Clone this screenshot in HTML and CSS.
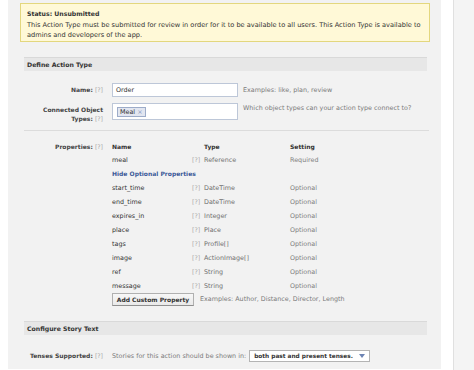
FILE: index.html
```html
<!DOCTYPE html>
<html>
<head>
<meta charset="utf-8">
<title>Define Action Type</title>
<link rel="stylesheet" href="styles.css">
</head>
<body>
<div class="page">
  <div class="main">
    <div class="notice">
      <div class="notice-title">Status: Unsubmitted</div>
      <div>This Action Type must be submitted for review in order for it to be available to all users. This Action Type is available to<br>admins and developers of the app.</div>
    </div>

    <div class="section">
      <div class="sec-head">Define Action Type</div>

      <div class="row row-name">
        <div class="lbl">Name: <span class="help">[?]</span></div>
        <div class="field">
          <div class="input">Order</div>
          <span class="desc">Examples: like, plan, review</span>
        </div>
      </div>

      <div class="row row-cot">
        <div class="lbl lbl-two">Connected Object<br>Types: <span class="help">[?]</span></div>
        <div class="field field-top">
          <div class="input input-tokens"><span class="token">Meal <span class="token-x">×</span></span></div>
          <span class="desc desc-top">Which object types can your action type connect to?</span>
        </div>
      </div>

      <div class="divider"></div>

      <div class="row row-props">
        <div class="lbl lbl-props">Properties: <span class="help">[?]</span></div>
        <div class="ptable">
          <div class="prow phead"><span>Name</span><span></span><span>Type</span><span>Setting</span></div>
          <div class="prow"><span class="pname">meal</span><span class="help">[?]</span><span class="ptype">Reference</span><span class="pset">Required</span></div>
          <div class="prow"><span class="plink">Hide Optional Properties</span></div>
          <div class="prow"><span class="pname">start_time</span><span class="help">[?]</span><span class="ptype">DateTime</span><span class="pset">Optional</span></div>
          <div class="prow"><span class="pname">end_time</span><span class="help">[?]</span><span class="ptype">DateTime</span><span class="pset">Optional</span></div>
          <div class="prow"><span class="pname">expires_in</span><span class="help">[?]</span><span class="ptype">Integer</span><span class="pset">Optional</span></div>
          <div class="prow"><span class="pname">place</span><span class="help">[?]</span><span class="ptype">Place</span><span class="pset">Optional</span></div>
          <div class="prow"><span class="pname">tags</span><span class="help">[?]</span><span class="ptype">Profile[]</span><span class="pset">Optional</span></div>
          <div class="prow"><span class="pname">image</span><span class="help">[?]</span><span class="ptype">ActionImage[]</span><span class="pset">Optional</span></div>
          <div class="prow"><span class="pname">ref</span><span class="help">[?]</span><span class="ptype">String</span><span class="pset">Optional</span></div>
          <div class="prow"><span class="pname">message</span><span class="help">[?]</span><span class="ptype">String</span><span class="pset">Optional</span></div>
          <div class="btn-row">
            <span class="btn">Add Custom Property</span>
            <span class="desc">Examples: Author, Distance, Director, Length</span>
          </div>
        </div>
      </div>
    </div>

    <div class="section section-2">
      <div class="sec-head">Configure Story Text</div>
      <div class="row row-tenses">
        <div class="lbl">Tenses Supported: <span class="help">[?]</span></div>
        <div class="field">
          <span class="desc">Stories for this action should be shown in:</span>
          <span class="select">both past and present tenses.<svg class="arrow" width="6" height="4" viewBox="0 0 6 4"><path d="M0 0h6L3 4z" fill="#6d84b4"/></svg></span>
        </div>
      </div>
    </div>
  </div>
  <div class="side"></div>
</div>
</body>
</html>
```

FILE: styles.css
```css
body {
  margin: 0;
  background: #fff;
  font-family: "DejaVu Sans", "Liberation Sans", sans-serif;
  font-size: 6.4px;
  color: #333;
}

.page {
  display: flex;
  gap: 12px;
  padding-left: 8px;
  height: 370px;
}

.main {
  width: 433px;
  height: 369px;
  box-sizing: border-box;
  background: #f2f2f2;
  padding: 3px 11px 0 12px;
}

.side {
  flex: 1;
  background: #f4f4f4;
  border-left: 1px solid #e0e0e0;
}

.notice {
  border: 1px solid #e3d77e;
  background: #fff9d7;
  padding: 5px 6px 0;
  font-size: 6.6px;
  line-height: 10.5px;
  white-space: nowrap;
  color: #333;
}

.notice-title {
  font-weight: bold;
  font-size: 6.2px;
}

.section {
  margin: 15px 3px 0 4px;
}

.section-2 {
  margin-top: 15px;
}

.sec-head {
  height: 13px;
  line-height: 13px;
  border-top: 1px solid #d9d9d9;
  background: #e7e7e7;
  padding-left: 3px;
  font-weight: bold;
  font-size: 6.2px;
  color: #333;
}

.row {
  display: grid;
  grid-template-columns: 79px 1fr;
  column-gap: 9px;
  align-items: center;
}

.row-name {
  margin-top: 12px;
}

.row-cot {
  margin-top: 6px;
  height: 17px;
  align-items: start;
}

.lbl {
  text-align: right;
  font-weight: bold;
  font-size: 6px;
  color: #444;
  white-space: nowrap;
}

.lbl-two {
  line-height: 9px;
  padding-top: 2px;
}

.help {
  font-weight: normal;
  font-size: 6.2px;
  color: #aaa;
}

.field {
  display: flex;
  align-items: center;
  gap: 5px;
}

.field-top {
  align-items: flex-start;
}

.input {
  width: 126px;
  height: 14px;
  box-sizing: border-box;
  border: 1px solid #bdc7d8;
  background: #fff;
  padding-left: 3px;
  line-height: 12px;
  color: #333;
}

.input-tokens {
  height: 17px;
  padding: 3px 0 0 4px;
}

.token {
  display: inline-block;
  height: 10px;
  box-sizing: border-box;
  line-height: 8px;
  padding: 0 2px;
  background: #e2e6f0;
  border: 1px solid #9dacc9;
  color: #333;
  vertical-align: top;
}

.token-x {
  color: #8a9bbf;
}

.desc {
  color: #7a7a7a;
  white-space: nowrap;
}

.desc-top {
  line-height: 10px;
}

.divider {
  height: 1px;
  background: #dcdcdc;
  margin: 10px -2px 9px 0;
}

.row-props {
  align-items: start;
}

.lbl-props {
  line-height: 13px;
}

.prow {
  display: grid;
  grid-template-columns: 80px 12px 86px 1fr;
  height: 14px;
  line-height: 14px;
  white-space: nowrap;
}

.phead {
  height: 13px;
  line-height: 13px;
  font-weight: bold;
  font-size: 6px;
  color: #333;
}

.pname {
  color: #333;
}

.ptype {
  color: #707070;
}

.pset {
  color: #808080;
}

.plink {
  grid-column: 1 / -1;
  color: #3b5998;
  font-weight: bold;
  font-size: 6px;
}

.btn-row {
  display: flex;
  align-items: center;
  gap: 6px;
}

.btn {
  display: inline-block;
  width: 82px;
  height: 13px;
  box-sizing: border-box;
  border: 1px solid #b0b0b0;
  border-bottom-color: #8f8f8f;
  background: linear-gradient(#f7f7f7, #e9e9e9);
  text-align: center;
  line-height: 11px;
  font-weight: bold;
  font-size: 6px;
  color: #333;
  white-space: nowrap;
}

.row-tenses {
  margin-top: 15px;
}

.row-tenses .field {
  gap: 3px;
}

.select {
  display: inline-flex;
  align-items: center;
  gap: 6px;
  height: 12px;
  box-sizing: border-box;
  border: 1px solid #b4b4b4;
  background: #fff;
  padding: 0 4px;
  font-weight: bold;
  font-size: 5.8px;
  color: #333;
  white-space: nowrap;
}

.arrow {
  display: block;
}
```
